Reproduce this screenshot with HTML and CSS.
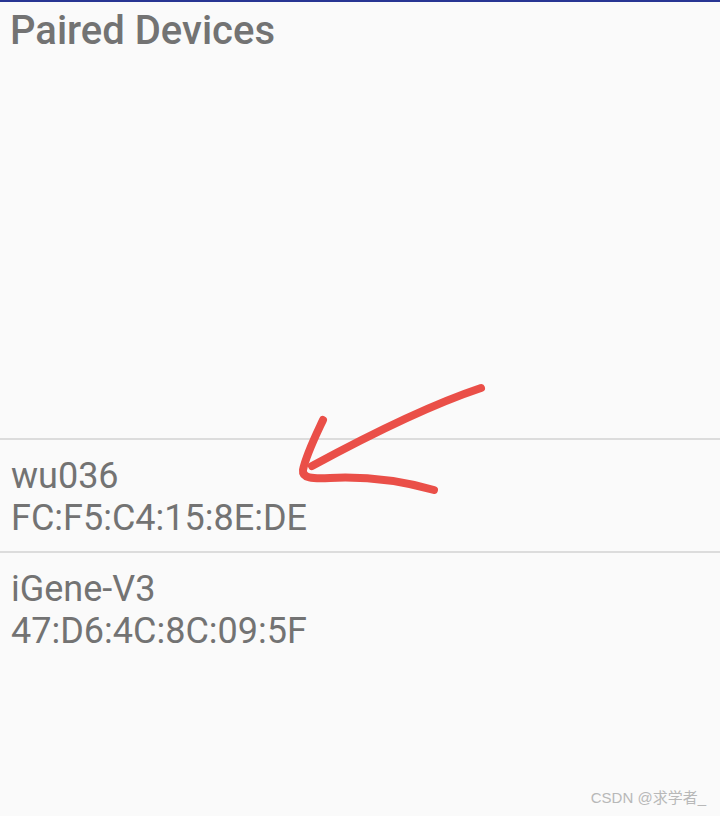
FILE: index.html
```html
<!DOCTYPE html>
<html>
<head>
<meta charset="utf-8">
<link rel="stylesheet" href="styles.css">
</head>
<body>
<div class="screen">
  <h1 class="title">Paired Devices</h1>
  <div class="spacer"></div>
  <ul class="devices">
    <li class="device">
      <div class="name">wu036</div>
      <div class="addr">FC:F5:C4:15:8E:DE</div>
    </li>
    <li class="device">
      <div class="name">iGene-V3</div>
      <div class="addr">47:D6:4C:8C:09:5F</div>
    </li>
  </ul>
  <svg class="arrow" width="720" height="816" viewBox="0 0 720 816">
    <path d="M481 388 C 430 405, 360 440, 312 466" fill="none" stroke="#ea4f48" stroke-width="8" stroke-linecap="round"/>
    <path d="M323 420 C 316 435, 306 455, 303 470 C 302 478, 312 479, 330 478 C 370 476, 405 482, 434 490" fill="none" stroke="#ea4f48" stroke-width="8" stroke-linecap="round" stroke-linejoin="round"/>
  </svg>
  <div class="watermark">CSDN @求学者_</div>
</div>
</body>
</html>
```
FILE: styles.css
```css
html, body {
  margin: 0;
  padding: 0;
  background: #fafafa;
}
.screen {
  position: relative;
  width: 720px;
  height: 816px;
  box-sizing: border-box;
  border-top: 2px solid #283593;
  font-family: Roboto, "Noto Sans", sans-serif;
  color: #737373;
  overflow: hidden;
}
.title {
  margin: 0;
  padding: 5px 0 0 10px;
  font-size: 40px;
  font-weight: 500;
  line-height: 48px;
  color: #737373;
}
.spacer {
  height: 383px;
}
.devices {
  list-style: none;
  margin: 0;
  padding: 0;
}
.device {
  border-top: 2px solid #dcdcdc;
  padding: 15px 0 12px 11px;
  height: 84px;
}
.name, .addr {
  font-size: 36px;
  line-height: 42px;
}
.arrow {
  position: absolute;
  left: 0;
  top: -2px;
  pointer-events: none;
}
.watermark {
  position: absolute;
  right: 14px;
  bottom: 9px;
  font-family: "Liberation Sans", "Noto Sans CJK SC", sans-serif;
  font-size: 15px;
  color: #b8b8b8;
}
```
